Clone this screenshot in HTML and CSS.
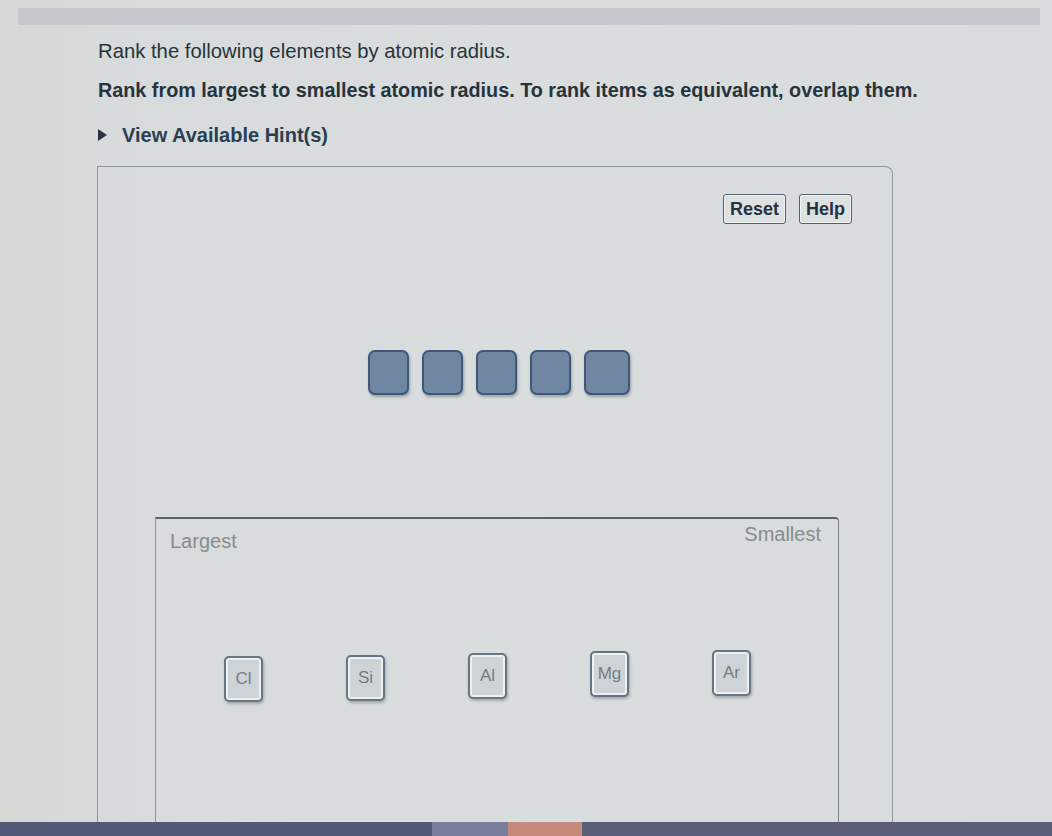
FILE: index.html
```html
<!DOCTYPE html>
<html>
<head>
<meta charset="utf-8">
<link rel="stylesheet" href="styles.css">
</head>
<body>
<div class="screen">
  <div class="topbar"></div>
  <div class="content">
    <p class="q">Rank the following elements by atomic radius.</p>
    <p class="instr">Rank from largest to smallest atomic radius. To rank items as equivalent, overlap them.</p>
    <div class="hint"><span class="tri"></span><span>View Available Hint(s)</span></div>
  </div>
  <div class="panel">
    <div class="toolbar">
      <button class="btn">Reset</button>
      <button class="btn">Help</button>
    </div>
    <div class="tray">
      <div class="slot"></div>
      <div class="slot"></div>
      <div class="slot"></div>
      <div class="slot"></div>
      <div class="slot wide"></div>
    </div>
    <div class="rankbox">
      <div class="rankhead">
        <span class="lbl largest">Largest</span>
        <span class="lbl">Smallest</span>
      </div>
      <div class="tiles">
        <div class="tile t1">Cl</div>
        <div class="tile t2">Si</div>
        <div class="tile t3">Al</div>
        <div class="tile t4">Mg</div>
        <div class="tile t5">Ar</div>
      </div>
    </div>
  </div>
  <div class="bezel">
    <div class="seg s1"></div>
    <div class="seg s2"></div>
    <div class="seg s3"></div>
    <div class="seg s4"></div>
  </div>
</div>
</body>
</html>
```

FILE: styles.css
```css
html, body {
  margin: 0;
  padding: 0;
}
body {
  background: #d5d9da;
  font-family: "Liberation Sans", Arial, sans-serif;
}
.screen {
  width: 1052px;
  height: 836px;
  overflow: hidden;
  display: flex;
  flex-direction: column;
  background: linear-gradient(90deg, #d6d8d4 0%, #d7dbdb 10%, #d9dddd 50%, #d8dcdc 100%);
}
.topbar {
  height: 17px;
  margin: 8px 12px 0 18px;
  background: #c5c9cd;
  flex: none;
}
.content {
  padding-left: 98px;
  flex: none;
}
.q {
  margin: 15px 0 0;
  font-size: 20.3px;
  line-height: 22px;
  color: #27333b;
}
.instr {
  margin: 17px 0 0;
  font-size: 19.8px;
  line-height: 22px;
  font-weight: bold;
  color: #27333b;
}
.hint {
  margin-top: 23px;
  display: flex;
  align-items: center;
  height: 22px;
  font-size: 20px;
  font-weight: bold;
  color: #2a3f52;
}
.tri {
  width: 0;
  height: 0;
  border-top: 6px solid transparent;
  border-bottom: 6px solid transparent;
  border-left: 9px solid #2a3642;
  margin-right: 15px;
}
.panel {
  margin: 20px 0 0 97px;
  width: 794px;
  flex: 1;
  border: 1px solid #8f9698;
  border-bottom: none;
  border-radius: 0 8px 0 0;
  display: flex;
  flex-direction: column;
}
.toolbar {
  display: flex;
  justify-content: flex-end;
  gap: 13px;
  padding: 27px 40px 0 0;
}
.btn {
  height: 30px;
  padding: 0 6px;
  font-family: "Liberation Sans", Arial, sans-serif;
  font-size: 18px;
  font-weight: bold;
  color: #24323e;
  background: #dde1e2;
  border: 1px solid #56606a;
  border-radius: 3px;
  box-shadow: inset 0 0 0 1px #f2f4f4;
}
.tray {
  display: flex;
  justify-content: center;
  gap: 13px;
  margin-top: 126px;
  padding-left: 7px;
}
.slot {
  width: 37px;
  height: 41px;
  background: #6f87a3;
  border: 2px solid #3f5878;
  border-radius: 7px;
  box-shadow: 1px 2px 3px rgba(40, 50, 60, 0.35);
}
.slot.wide {
  width: 42px;
}
.rankbox {
  margin: 122px 0 0 57px;
  width: 682px;
  flex: 1;
  border-top: 2px solid #5b6367;
  border-left: 1px solid #8d9496;
  border-right: 1px solid #7c8486;
  border-radius: 0 4px 0 0;
  display: flex;
  flex-direction: column;
}
.rankhead {
  display: flex;
  justify-content: space-between;
  align-items: flex-start;
  padding: 3px 17px 0 14px;
}
.lbl {
  font-size: 20px;
  line-height: 24px;
  color: #868c90;
}
.largest {
  margin-top: 7px;
}
.tiles {
  display: flex;
  gap: 83px;
  padding: 99px 0 0 68px;
  align-items: flex-start;
}
.tile {
  width: 35px;
  height: 42px;
  display: flex;
  align-items: center;
  justify-content: center;
  font-size: 17px;
  color: #767d82;
  background: #cdd3d6;
  border: 2px solid #667684;
  border-radius: 5px;
  box-shadow: inset 0 0 0 2px #eef1f2, 1px 2px 3px rgba(40, 50, 60, 0.3);
}
.t1 { margin-top: 4px; }
.t2 { margin-top: 3px; }
.t3 { margin-top: 1px; }
.t4 { margin-top: -1px; }
.t5 { margin-top: -2px; }
.bezel {
  height: 14px;
  flex: none;
  display: flex;
}
.seg { height: 100%; }
.s1 { width: 432px; background: #535a78; }
.s2 { width: 76px; background: #7a7e9c; }
.s3 { width: 74px; background: #c48979; }
.s4 { flex: 1; background: #5a5e79; }
```
